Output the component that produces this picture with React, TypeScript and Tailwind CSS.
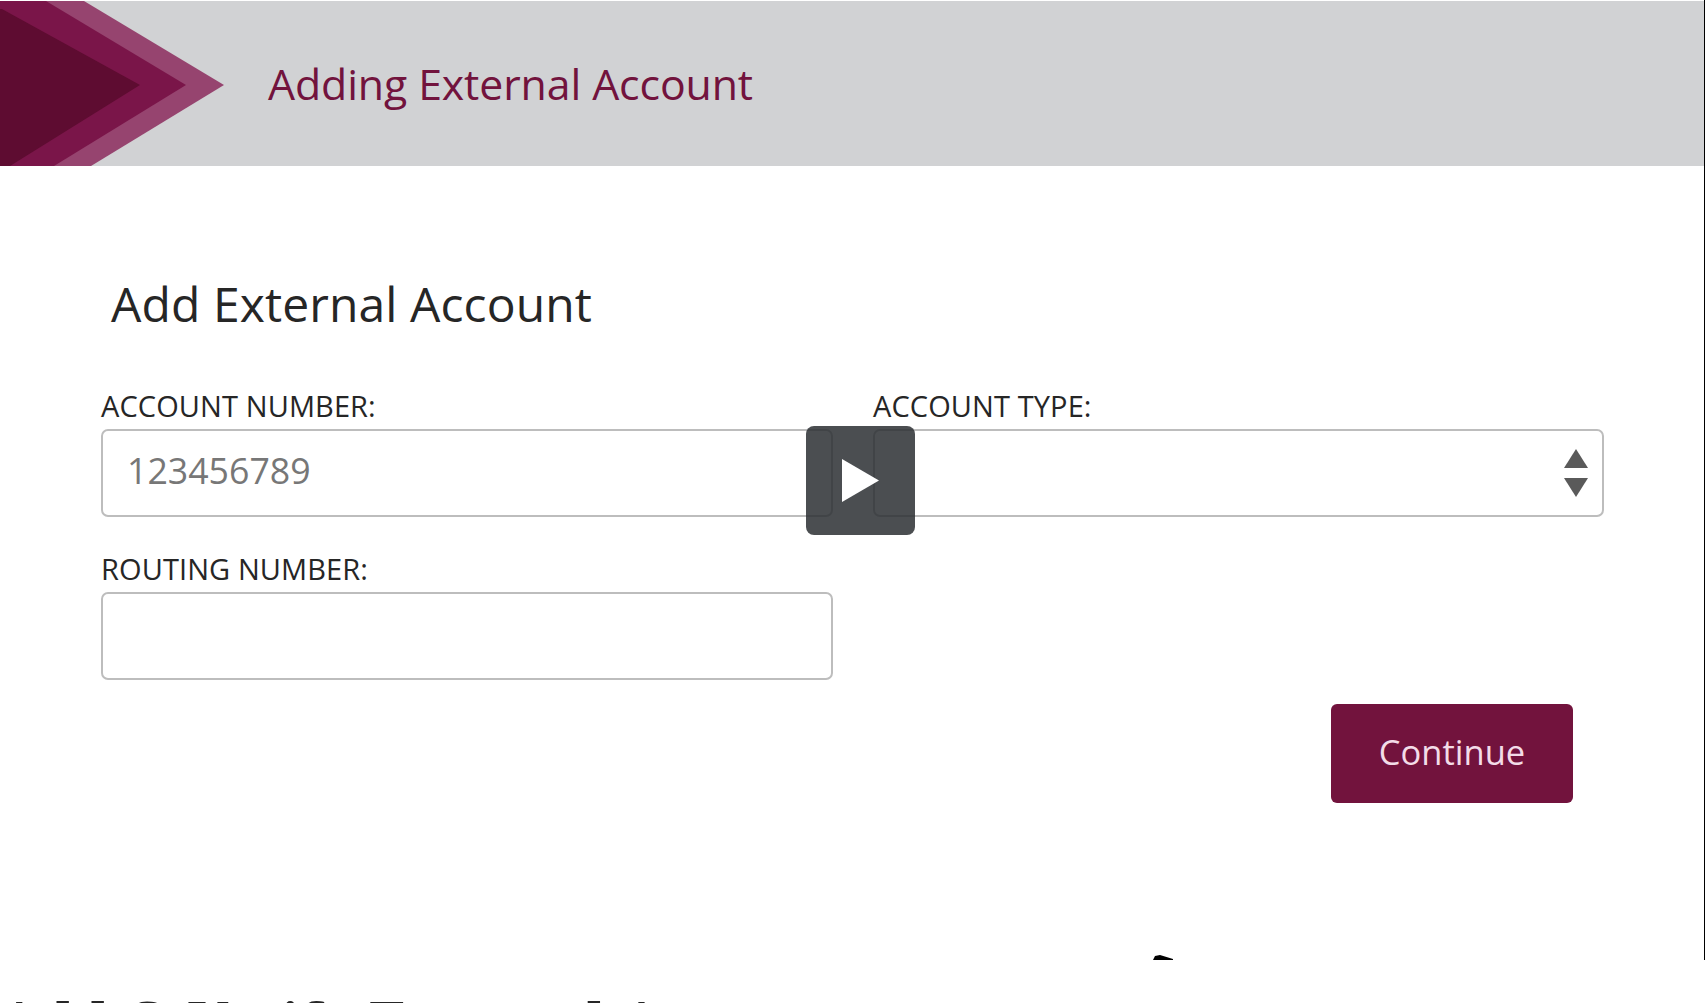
const openSans = { fontFamily: '"Open Sans", sans-serif' }

function Field({ label, placeholder }: { label: string; placeholder?: string }) {
  return (
    <div>
      <label className="block h-[34px] mb-[6px] text-[29px] leading-[34px] text-[#262626] tracking-[0.1px]">{label}</label>
      <input
        placeholder={placeholder}
        className="block w-full h-[88px] pl-[24px] pr-[24px] pb-[6px] rounded-[7px] border-2 border-[#bdbdbd] bg-white text-[35.7px] placeholder:text-[#777777] outline-none"
      />
    </div>
  )
}

function TypeField({ label }: { label: string }) {
  return (
    <div>
      <label className="block h-[34px] mb-[6px] text-[29px] leading-[34px] text-[#262626] tracking-[0.1px]">{label}</label>
      <div className="flex items-center justify-end h-[88px] pr-[14px] rounded-[7px] border-2 border-[#bdbdbd] bg-white">
        <svg width="24" height="48" viewBox="0 0 24 48">
          <polygon points="12,0 24,19 0,19" fill="#5a5a5a" />
          <polygon points="0,29 24,29 12,48" fill="#5a5a5a" />
        </svg>
      </div>
    </div>
  )
}

export default function App() {
  return (
    <div className="relative h-[1003px] overflow-hidden bg-white" style={openSans}>
      <div className="relative w-[1705px] h-[960px] overflow-hidden border-r border-black">
        {/* banner */}
        <div className="flex items-center h-[165px] mt-px bg-[#d1d2d4]">
          <svg className="shrink-0" width="224" height="165" viewBox="0 0 224 165">
            <polygon points="0,0 84,0 224,84 91,165 0,165" fill="#96446f" />
            <polygon points="0,0 46,0 186,84 54,165 0,165" fill="#7a1549" />
            <polygon points="0,8 2,8 140,84 10,165 0,165" fill="#5e0c31" />
          </svg>
          <h1 className="ml-[44px] pt-[2px] text-[42.8px] text-[#72133d] tracking-[-0.1px]">Adding External Account</h1>
        </div>

        {/* form */}
        <div className="pl-[101px] pr-[100px]">
          <h2 className="ml-[10px] mt-[108px] h-[60px] text-[48px] leading-[60px] text-[#262626] tracking-[0.1px]">
            Add External Account
          </h2>
          <div className="grid grid-cols-[732px_731px] gap-x-[40px] gap-y-[35px] mt-[55px]">
            <Field label="ACCOUNT NUMBER:" placeholder="123456789" />
            <TypeField label="ACCOUNT TYPE:" />
            <Field label="ROUTING NUMBER:" />
          </div>
          <div className="flex justify-end mt-[24px] pr-[31px]">
            <button className="w-[242px] h-[99px] pb-[4px] rounded-[6px] bg-[#72133d] text-[34.5px] text-[#f3dce8]">Continue</button>
          </div>
        </div>

        {/* cursor tip cut off by the video edge */}
        <svg className="absolute left-[1153px] top-[955px]" width="21" height="5" viewBox="0 0 21 5">
          <polygon points="0,5 2,1 7,0 20,4 20,5" fill="#000000" />
        </svg>

        {/* play button */}
        <div className="absolute left-[806px] top-[426px] flex items-center justify-center w-[109px] h-[109px] rounded-[8px] bg-[#2b2f32]/85">
          <svg width="37" height="43" viewBox="0 0 37 43">
            <polygon points="0,0 37,21.5 0,43" fill="#ffffff" />
          </svg>
        </div>
      </div>

      <h2
        className="mt-[32px] text-[50px] leading-[60px] font-bold text-[#262626] whitespace-nowrap"
        style={{ fontFamily: '"DejaVu Serif", serif' }}
      >
        Add &amp; Verify External Account
      </h2>
    </div>
  )
}
